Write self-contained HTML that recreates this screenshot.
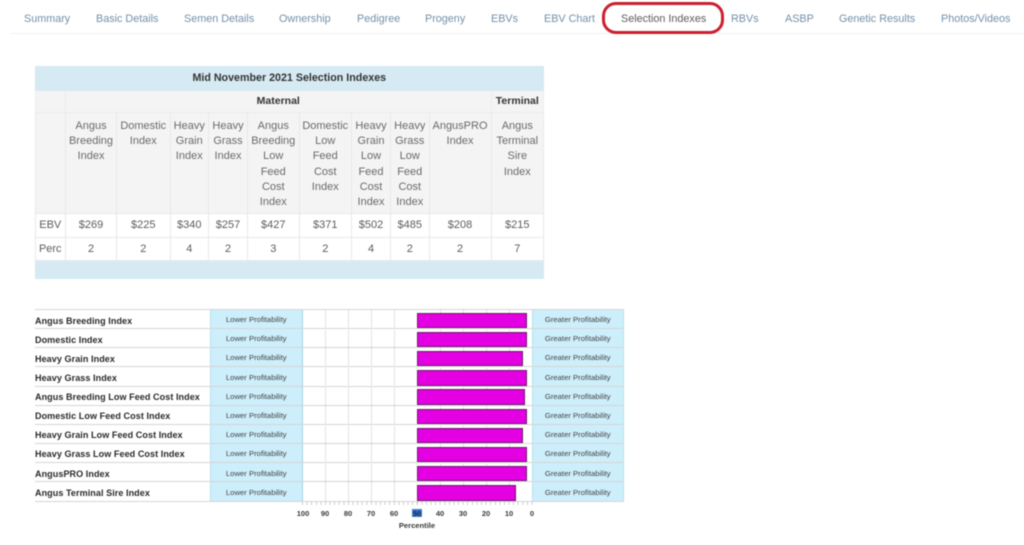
<!DOCTYPE html>
<html><head><meta charset="utf-8"><title>Selection Indexes</title>
<style>
html,body{margin:0;padding:0;background:#fff}
body{width:1024px;height:545px;position:relative;overflow:hidden;font-family:"Liberation Sans",Arial,sans-serif;filter:blur(.4px)}
.n{position:absolute;top:12.5px;font-size:10.8px;line-height:13px;color:#7390aa;white-space:nowrap}
#hr{position:absolute;left:11px;right:0;top:33px;height:1px;background:#efefef}
#ring{position:absolute;left:602px;top:2px;width:116px;height:26px;border:3px solid #cc1f2e;border-radius:14px}
table{position:absolute;left:34.5px;top:66px;width:508.5px;border-collapse:collapse;table-layout:fixed;font-size:11px;color:#5c5c5c}
td{padding:0;text-align:center;border:1px solid #e8e8e8;line-height:15.2px;box-sizing:border-box}
.t td{background:#d6eaf4;border-color:#d6eaf4;font-weight:bold;font-size:10.7px;color:#333;height:24px}
.s td{background:#f4f4f4;font-weight:bold;font-size:10.5px;color:#333;height:22px;border-color:#ececec;padding-top:1px}
.h td{background:#f4f4f4;vertical-align:top;padding-top:6px;height:101px;color:#6a6a6a}
.v td{height:24px;background:#fff;padding-top:1px}
.p td{height:23px;background:#fff;padding-top:1px}
.f td{background:#d6eaf4;border-color:#d6eaf4;height:18px}
.line{position:absolute;left:35px;width:589px;height:1px;background:#d6d6d6}
.lab{position:absolute;left:35px;width:175px;font-size:9.05px;font-weight:bold;color:#2a2a2a;line-height:20px;white-space:nowrap;letter-spacing:.06px}
.lo,.hi{position:absolute;height:19.2px;line-height:21px;font-size:7.7px;color:#444;text-align:center;background:#cdeefb;white-space:nowrap}
.lo{left:210px;width:92.5px;box-shadow:inset -1px 0 #a9d3e6,inset 1px 0 #b9dfee}
.hi{left:531.5px;width:92.5px;box-shadow:inset 1px 0 #b9dfee,inset -1px 0 #b9dfee}
.g{position:absolute;top:309px;height:192px;width:0;border-left:1px dotted #c8c8c8}
.b{position:absolute;left:417px;background:#e400e2;border:1px solid #6b1c6b;box-sizing:border-box}
.a{position:absolute;top:509px;width:24px;text-align:center;font-size:7.5px;font-weight:bold;line-height:9px;color:#3a3a3a}
#tk{position:absolute;left:302px;top:501px;width:231px;height:4px;background:repeating-linear-gradient(90deg,#cfcfcf 0,#cfcfcf 1px,transparent 1px,transparent 4.59px)}
</style></head><body>

<div class="n" style="left:24px">Summary</div>
<div class="n" style="left:96px">Basic Details</div>
<div class="n" style="left:184px">Semen Details</div>
<div class="n" style="left:279px">Ownership</div>
<div class="n" style="left:357px">Pedigree</div>
<div class="n" style="left:425px">Progeny</div>
<div class="n" style="left:491px">EBVs</div>
<div class="n" style="left:544px">EBV Chart</div>
<div class="n" style="left:621px;color:#5c5c5c">Selection Indexes</div>
<div class="n" style="left:731px">RBVs</div>
<div class="n" style="left:785px">ASBP</div>
<div class="n" style="left:839px">Genetic Results</div>
<div class="n" style="left:941px">Photos/Videos</div>
<div id="hr"></div>
<div id="ring"></div>

<table>
<colgroup><col style="width:30.5px"><col style="width:51px"><col style="width:53.5px"><col style="width:38.5px"><col style="width:39px"><col style="width:51.5px"><col style="width:52.5px"><col style="width:39px"><col style="width:38.5px"><col style="width:62px"><col style="width:52.5px"></colgroup>
<tr class="t"><td colspan="11">Mid November 2021 Selection Indexes</td></tr>
<tr class="s"><td></td><td colspan="9">Maternal</td><td>Terminal</td></tr>
<tr class="h"><td></td><td>Angus<br>Breeding<br>Index</td><td>Domestic<br>Index</td><td>Heavy<br>Grain<br>Index</td><td>Heavy<br>Grass<br>Index</td><td>Angus<br>Breeding<br>Low<br>Feed<br>Cost<br>Index</td><td>Domestic<br>Low<br>Feed<br>Cost<br>Index</td><td>Heavy<br>Grain<br>Low<br>Feed<br>Cost<br>Index</td><td>Heavy<br>Grass<br>Low<br>Feed<br>Cost<br>Index</td><td>AngusPRO<br>Index</td><td>Angus<br>Terminal<br>Sire<br>Index</td></tr>
<tr class="v"><td>EBV</td><td>$269</td><td>$225</td><td>$340</td><td>$257</td><td>$427</td><td>$371</td><td>$502</td><td>$485</td><td>$208</td><td>$215</td></tr>
<tr class="p"><td>Perc</td><td>2</td><td>2</td><td>4</td><td>2</td><td>3</td><td>2</td><td>4</td><td>2</td><td>2</td><td>7</td></tr>
<tr class="f"><td colspan="11"></td></tr>
</table>

<div class="g" style="left:325px"></div><div class="g" style="left:348px"></div><div class="g" style="left:371px"></div><div class="g" style="left:394px"></div><div class="g" style="left:440px"></div><div class="g" style="left:463px"></div><div class="g" style="left:486px"></div><div class="g" style="left:509px"></div>

<div class="lab" style="top:310.5px">Angus Breeding Index</div><div class="lo" style="top:309px">Lower Profitability</div><div class="hi" style="top:309px">Greater Profitability</div>
<div class="lab" style="top:329.5px">Domestic Index</div><div class="lo" style="top:328.2px">Lower Profitability</div><div class="hi" style="top:328.2px">Greater Profitability</div>
<div class="lab" style="top:348.5px">Heavy Grain Index</div><div class="lo" style="top:347.4px">Lower Profitability</div><div class="hi" style="top:347.4px">Greater Profitability</div>
<div class="lab" style="top:368px">Heavy Grass Index</div><div class="lo" style="top:366.6px">Lower Profitability</div><div class="hi" style="top:366.6px">Greater Profitability</div>
<div class="lab" style="top:387px">Angus Breeding Low Feed Cost Index</div><div class="lo" style="top:385.8px">Lower Profitability</div><div class="hi" style="top:385.8px">Greater Profitability</div>
<div class="lab" style="top:406px">Domestic Low Feed Cost Index</div><div class="lo" style="top:405px">Lower Profitability</div><div class="hi" style="top:405px">Greater Profitability</div>
<div class="lab" style="top:425px">Heavy Grain Low Feed Cost Index</div><div class="lo" style="top:424.2px">Lower Profitability</div><div class="hi" style="top:424.2px">Greater Profitability</div>
<div class="lab" style="top:444px">Heavy Grass Low Feed Cost Index</div><div class="lo" style="top:443.4px">Lower Profitability</div><div class="hi" style="top:443.4px">Greater Profitability</div>
<div class="lab" style="top:463.5px">AngusPRO Index</div><div class="lo" style="top:462.6px">Lower Profitability</div><div class="hi" style="top:462.6px">Greater Profitability</div>
<div class="lab" style="top:482.5px">Angus Terminal Sire Index</div><div class="lo" style="top:481.8px">Lower Profitability</div><div class="hi" style="top:481.8px">Greater Profitability</div>

<div class="line" style="top:309px"></div><div class="line" style="top:328px"></div><div class="line" style="top:347px"></div><div class="line" style="top:366px"></div><div class="line" style="top:386px"></div><div class="line" style="top:405px"></div><div class="line" style="top:424px"></div><div class="line" style="top:443px"></div><div class="line" style="top:462px"></div><div class="line" style="top:481px"></div><div class="line" style="top:501px"></div>

<div class="b" style="top:313px;height:15px;width:110.3px"></div>
<div class="b" style="top:332px;height:15px;width:110.3px"></div>
<div class="b" style="top:351px;height:15px;width:105.7px"></div>
<div class="b" style="top:370px;height:16px;width:110.3px"></div>
<div class="b" style="top:389px;height:16px;width:108px"></div>
<div class="b" style="top:409px;height:15px;width:110.3px"></div>
<div class="b" style="top:428px;height:15px;width:105.7px"></div>
<div class="b" style="top:447px;height:15px;width:110.3px"></div>
<div class="b" style="top:466px;height:15px;width:110.3px"></div>
<div class="b" style="top:485px;height:16px;width:99px"></div>

<div id="tk"></div>
<div class="a" style="left:291px">100</div><div class="a" style="left:313px">90</div><div class="a" style="left:336px">80</div><div class="a" style="left:359px">70</div><div class="a" style="left:382px">60</div>
<div style="position:absolute;left:412px;top:509px;width:10px;height:8px;background:#3d7ccf"></div>
<div class="a" style="left:405px;color:#10284e">50</div><div class="a" style="left:428px">40</div><div class="a" style="left:451px">30</div><div class="a" style="left:474px">20</div><div class="a" style="left:497px">10</div><div class="a" style="left:520px">0</div>
<div class="a" style="left:387px;width:60px;top:521px;font-size:7.6px">Percentile</div>

</body></html>
